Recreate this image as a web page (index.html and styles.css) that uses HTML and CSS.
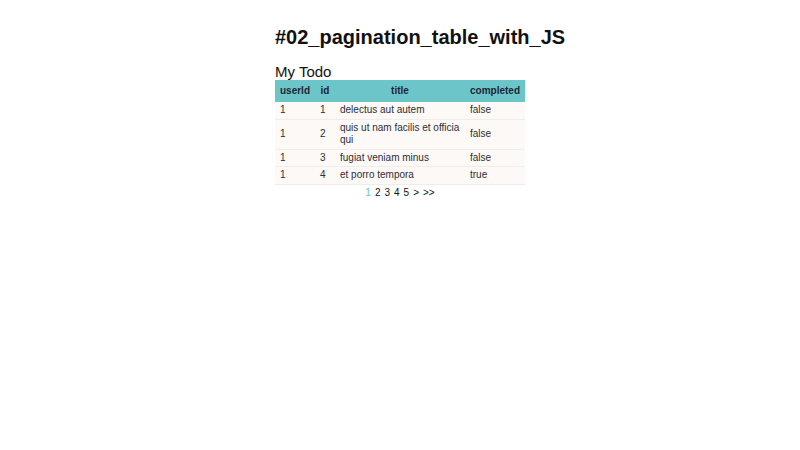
FILE: index.html
```html
<!DOCTYPE html>
<html>
<head>
<meta charset="utf-8">
<link rel="stylesheet" href="styles.css">
</head>
<body>
<div class="wrap">
  <h1 class="title">#02_pagination_table_with_JS</h1>
  <h2 class="sub">My Todo</h2>
  <table class="todo">
    <thead>
      <tr><th class="c1">userId</th><th class="c2">id</th><th class="c3">title</th><th class="c4">completed</th></tr>
    </thead>
    <tbody>
      <tr><td>1</td><td>1</td><td>delectus aut autem</td><td>false</td></tr>
      <tr><td>1</td><td>2</td><td>quis ut nam facilis et officia qui</td><td>false</td></tr>
      <tr><td>1</td><td>3</td><td>fugiat veniam minus</td><td>false</td></tr>
      <tr><td>1</td><td>4</td><td>et porro tempora</td><td>true</td></tr>
    </tbody>
  </table>
  <div class="pager"><span class="page active">1</span><span class="page">2</span><span class="page">3</span><span class="page">4</span><span class="page">5</span><span class="page">&gt;</span><span class="page">&gt;&gt;</span></div>
</div>
</body>
</html>
```
FILE: styles.css
```css
html, body { margin: 0; padding: 0; background: #fff; }
body { font-family: "Liberation Sans", Arial, sans-serif; color: #222; }
.wrap { width: 250px; margin: 0 auto; padding-top: 26px; }
.title { font-size: 20px; font-weight: bold; margin: 0 0 14px; white-space: nowrap; color: #111; line-height: 23px; }
.sub { font-size: 15px; font-weight: normal; margin: 0; line-height: 17px; color: #111; }
.todo { width: 250px; table-layout: fixed; border-collapse: collapse; font-size: 10px; background: #fdf9f7; }
.todo th { background: #6cc5c8; color: #1e2535; font-weight: bold; padding: 5px 5px; line-height: 12px; }
.todo td { padding: 2px 5px; line-height: 12.5px; color: #2d2d35; border-bottom: 1px solid #f1ece9; vertical-align: middle; }
.c1 { width: 30px; }
.c2 { width: 10px; }
.c3 { width: 120px; }
.c4 { width: 50px; }
.pager { text-align: center; font-size: 10px; line-height: 12px; margin-top: 2px; color: #111; }
.page { margin: 0 2px; }
.page.active { color: #6cc5c8; }
```
